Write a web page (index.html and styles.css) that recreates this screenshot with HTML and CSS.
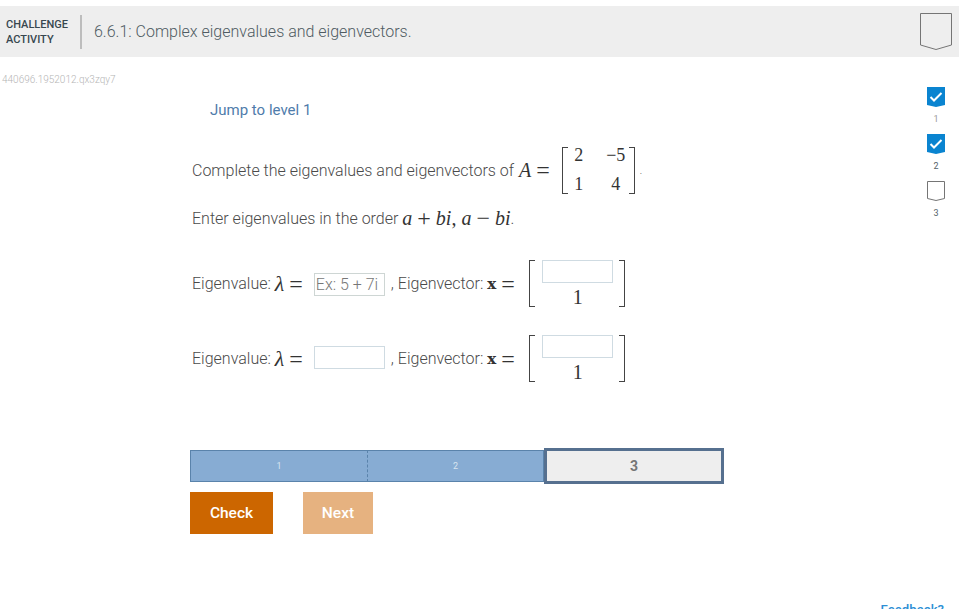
FILE: index.html
```html
<!DOCTYPE html>
<html lang="en">
<head>
<meta charset="utf-8">
<title>Challenge activity 6.6.1</title>
<link rel="stylesheet" href="styles.css">
</head>
<body>
<header class="header">
  <div class="kicker">CHALLENGE<br>ACTIVITY</div>
  <h1 class="title">6.6.1: Complex eigenvalues and eigenvectors.</h1>
  <svg class="bookmark-lg" width="32" height="38" viewBox="0 0 32 38"><path d="M.5.5h31v31.5L16 36.5.5 32z" fill="none" stroke="#757575"/></svg>
</header>
<div class="layout">
  <main class="content">
    <div class="code">440696.1952012.qx3zqy7</div>
    <div class="activity">
      <a class="jump">Jump to level 1</a>
      <p class="line line-first">Complete the eigenvalues and eigenvectors of <span class="math mA"><i>A</i><span class="rel">=</span></span>
        <span class="bmatrix">
          <span class="br br-l"></span>
          <span class="mgrid"><span>2</span><span>−5</span><span>1</span><span>4</span></span>
          <span class="br br-r"></span>
        </span><span class="dot">.</span></p>
      <p class="line line-second">Enter eigenvalues in the order <span class="math"><i>a</i><span class="rel">+</span><i>bi</i>, <i>a</i><span class="rel">−</span><i>bi</i></span>.</p>
      <div class="eq eq-first">
        <span>Eigenvalue:</span><span class="math lam"><i>λ</i><span class="rel">=</span></span>
        <input class="ans ans-main ans-hint" placeholder="Ex: 5 + 7i" type="text">
        <span class="after">, Eigenvector:</span><span class="math vec"><b>x</b><span class="rel">=</span></span>
        <span class="vmatrix">
          <span class="br br-l"></span>
          <span class="vcol"><input class="ans" type="text"><span class="math one">1</span></span>
          <span class="br br-r"></span>
        </span>
      </div>
      <div class="eq eq-second">
        <span>Eigenvalue:</span><span class="math lam"><i>λ</i><span class="rel">=</span></span>
        <input class="ans ans-main" type="text">
        <span class="after">, Eigenvector:</span><span class="math vec"><b>x</b><span class="rel">=</span></span>
        <span class="vmatrix">
          <span class="br br-l"></span>
          <span class="vcol"><input class="ans" type="text"><span class="math one">1</span></span>
          <span class="br br-r"></span>
        </span>
      </div>
      <div class="progress">
        <div class="seg seg-done seg-a">1</div>
        <div class="seg seg-done seg-b">2</div>
        <div class="seg seg-current">3</div>
      </div>
      <div class="actions">
        <button class="btn btn-check" type="button">Check</button>
        <button class="btn btn-next" type="button">Next</button>
      </div>
    </div>
  </main>
  <aside class="levels">
    <div class="level">
      <svg width="18" height="20" viewBox="0 0 18 20"><path d="M0 0h18v18l-9 2-9-2z" fill="#0a84d0"/><path d="M3.500 10l3.500 3.500 7.500-7.500" fill="none" stroke="#fff" stroke-width="2"/></svg>
      <span class="num num-faded">1</span>
    </div>
    <div class="level">
      <svg width="18" height="20" viewBox="0 0 18 20"><path d="M0 0h18v18l-9 2-9-2z" fill="#0a84d0"/><path d="M3.500 10l3.500 3.500 7.500-7.500" fill="none" stroke="#fff" stroke-width="2"/></svg>
      <span class="num">2</span>
    </div>
    <div class="level">
      <svg width="18" height="20" viewBox="0 0 18 20"><path d="M.5.5h17v17L9 19.500.5 17.500z" fill="none" stroke="#757575"/></svg>
      <span class="num">3</span>
    </div>
  </aside>
</div>
<footer class="feedback"><a>Feedback?</a></footer>
</body>
</html>
```
FILE: styles.css
```css
* { box-sizing: border-box; }
html, body { margin: 0; height: 609px; overflow: hidden; background: #fff; }
body { padding-top: 6px; font-family: Roboto, "Liberation Sans", sans-serif; font-weight: 300; color: #4a4a4a; font-size: 16px; }

.header { height: 51px; background: #eeeeee; display: flex; align-items: center; padding: 0 7px 0 6px; }
.kicker { font-size: 11px; font-weight: 500; line-height: 15px; color: #37474f; padding-right: 12px; border-right: 2px solid #bdbdbd; height: 34px; display: flex; align-items: center; }
.title { flex: 1; margin: 0 0 0 12px; font-size: 16px; font-weight: 300; color: #4f5b62; }
.bookmark-lg { display: block; margin-top: 1px; }

.layout { display: flex; justify-content: space-between; }
.content { flex: 1; }
.code { font-size: 10px; color: #b5b5b5; margin: 17px 0 0 2px; line-height: 12px; height: 12px; }
.activity { margin-left: 190px; width: 534px; }
.jump { display: block; margin: 15px 0 0 20px; font-size: 15px; font-weight: 400; color: #4f7cab; line-height: 18px; }

.line { margin: 0; display: flex; align-items: center; white-space: pre; margin-left: 2px; }
.line-first { margin-top: 27px; height: 48px; }
.line-second { margin-top: 14px; height: 20px; }
.math { font-family: "Liberation Serif", serif; font-size: 20px; color: #333; font-weight: 400; white-space: pre; display: inline-flex; align-items: center; }
.math i { font-style: italic; }
.math b { font-family: "DejaVu Serif", serif; font-size: 15px; }
.rel { font-size: 24px; line-height: 20px; font-weight: 400; margin: 0 5px; }
.mA { margin-left: 1px; }
.bmatrix { display: inline-flex; height: 47px; margin-left: 7px; align-self: center; }
.br { display: block; width: 6px; border: 1px solid #444; }
.br-l { border-right: 0; }
.br-r { border-left: 0; }
.mgrid { display: grid; grid-template-columns: 16px 22px; column-gap: 18px; row-gap: 8px; align-content: center; justify-items: center; font-family: "Liberation Serif", serif; font-size: 18px; line-height: 21px; font-weight: 400; color: #333; width: 61px; padding: 0 1px 0 3px; }
.dot { align-self: center; margin-left: 5px; font-size: 10px; }

.eq { display: flex; align-items: center; height: 47px; margin-left: 2px; }
.eq-first { margin-top: 32px; }
.eq-second { margin-top: 28px; }
.lam { margin-left: 4px; width: 39px; }
.lam i { font-size: 22px; }
.ans { display: block; width: 71px; height: 23px; border: 1px solid #cfdbe2; padding: 0 1px; font: 300 16px Roboto, sans-serif; color: #555; background: #fff; outline: 0; border-radius: 0; }
.ans::placeholder { color: #777; opacity: 1; }
.eq-first .ans-main { margin-top: 2px; }
.eq-second .ans-main { margin-bottom: 3px; }
.ans-hint { border-color: #ced6d4; }
.after { margin-left: 6px; }
.vec { margin-left: 4px; width: 32px; }
.vmatrix { display: flex; height: 47px; margin-left: 10px; }
.vcol { width: 84px; display: flex; flex-direction: column; align-items: center; padding-left: 1px; }
.one { line-height: 17px; margin-top: 6px; }

.progress { display: flex; align-items: center; margin-top: 66px; height: 36px; }
.seg { height: 32px; display: flex; align-items: center; justify-content: center; font-size: 9px; font-weight: 400; }
.seg-done { background: #87acd3; border: 1px solid #5a83ab; border-left: 0; color: #d8e4f0; }
.seg-a { width: 178px; border-left: 1px solid #5a83ab; border-right: 1px dashed #5a83ab; }
.seg-b { width: 176px; }
.seg-current { width: 180px; height: 36px; background: #eeeeee; border: 3px solid #56708f; font-size: 14px; font-weight: 700; color: #757575; }

.actions { display: flex; gap: 30px; margin-top: 8px; }
.btn { height: 42px; border: 0; border-radius: 0; color: #fff; font: 500 15.500px Roboto, sans-serif; padding: 0; }
.btn-check { width: 83px; background: #cc6600; }
.btn-next { width: 70px; background: #e6b280; }

.levels { width: 18px; margin-right: 14px; margin-top: 30px; display: flex; flex-direction: column; align-items: center; gap: 5px; }
.level { display: flex; flex-direction: column; align-items: center; height: 42px; }
.level svg { display: block; flex: none; }
.num { font-size: 9px; font-weight: 400; color: #55616a; margin-top: 6px; line-height: 12px; }
.num-faded { color: #9a9a9a; }

.feedback { position: absolute; top: 602px; right: 15px; font-size: 13.200px; font-weight: 500; color: #2d8fd5; line-height: 16px; }
```
